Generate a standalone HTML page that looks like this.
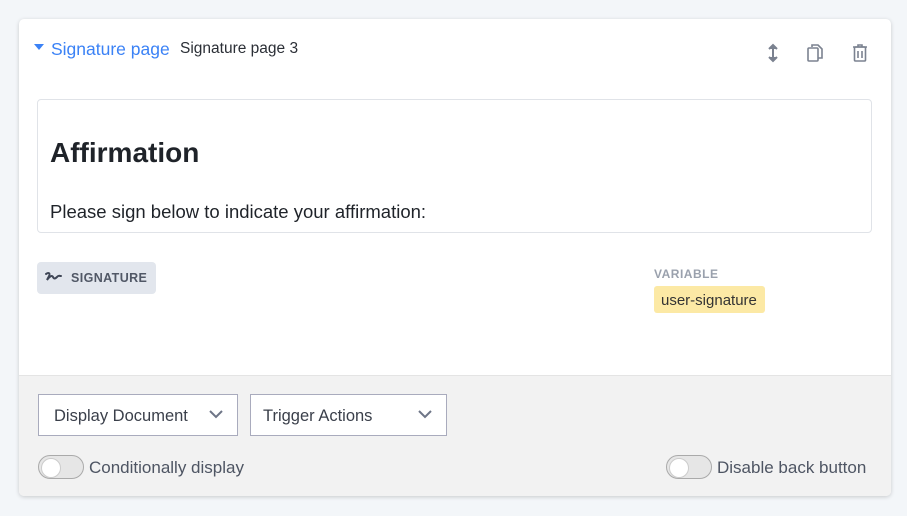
<!DOCTYPE html>
<html><head><style>
*{box-sizing:border-box;margin:0;padding:0}
body{width:907px;height:516px;background:#f3f6f9;font-family:"Liberation Sans",sans-serif;position:relative;overflow:hidden}
.card{position:absolute;left:19px;top:19px;width:872px;height:477px;background:#fff;border-radius:5px;box-shadow:0 1px 4px rgba(0,0,0,.18);overflow:hidden}
.abs{position:absolute}
.foot{position:absolute;left:0;top:356px;width:872px;height:121px;background:#f2f2f2;border-top:1px solid #e4e4e4}
.sel{position:absolute;top:18px;height:42px;background:#fff;border:1px solid #a9abbd;font-size:16.5px;color:#3a3f4a;padding:12px 0 0 15px}
.sel svg{position:absolute;right:14px;top:15px}
.tog{position:absolute;width:46px;height:24px;border-radius:12px;background:#e6e6e6;border:1px solid #aaa}
.tog:after{content:"";position:absolute;left:2px;top:2px;width:18px;height:18px;border-radius:50%;background:#fff;border:1px solid #ccc}
.lbl{position:absolute;font-size:17px;color:#4e5563}
</style></head><body>
<div class="card">
 <svg class="abs" style="left:15px;top:25px" width="10" height="7"><path d="M0 0h10L5 6z" fill="#3b82f6"/></svg>
 <div class="abs" style="left:32px;top:20px;font-size:17.5px;color:#3b82f6">Signature page</div>
 <div class="abs" style="left:161px;top:21px;font-size:15.5px;color:#2b2f36">Signature page 3</div>
 <svg class="abs" style="left:747px;top:24px" width="14" height="20" viewBox="0 0 14 20" fill="none" stroke="#7b8290" stroke-width="2"><path d="M7 3v14"/><path d="M3 6l4-4 4 4M3 14l4 4 4-4" fill="#7b8290"/></svg>
 <svg class="abs" style="left:787px;top:24px" width="18" height="20" viewBox="0 0 18 20" fill="none" stroke="#7b8290" stroke-width="1.6"><path d="M6 4V2h6l4 4v9h-4"/><rect x="2" y="5" width="10" height="13" rx="1"/></svg>
 <svg class="abs" style="left:832px;top:24px" width="18" height="20" viewBox="0 0 18 20" fill="none" stroke="#7b8290" stroke-width="1.6"><path d="M2 4h14M7 4V2h4v2"/><rect x="3.5" y="4" width="11" height="14" rx="1"/><path d="M7 8v7M11 8v7"/></svg>
 <div class="abs" style="left:18px;top:80px;width:835px;height:134px;border:1px solid #e0e3e8;border-radius:4px"></div>
 <div class="abs" style="left:31px;top:118px;font-size:28px;font-weight:bold;color:#1f2329">Affirmation</div>
 <div class="abs" style="left:31px;top:182px;font-size:18.5px;color:#1f2329">Please sign below to indicate your affirmation:</div>
 <div class="abs" style="left:18px;top:243px;width:119px;height:32px;background:#e2e6ed;border-radius:4px"></div>
 <svg class="abs" style="left:25px;top:252px" width="20" height="12" viewBox="0 0 20 12" fill="none" stroke="#3f4656" stroke-width="2" stroke-linecap="round"><path d="M2 3c3-2 5-1 2 4l-1 2c3-4 5-5 6-3s2 2 4 0 2-1 4-1"/></svg>
 <div class="abs" style="left:52px;top:252px;font-size:12.5px;font-weight:bold;letter-spacing:.4px;color:#515866">SIGNATURE</div>
 <div class="abs" style="left:635px;top:248px;font-size:12px;font-weight:bold;letter-spacing:.5px;color:#9aa1ad">VARIABLE</div>
 <div class="abs" style="left:635px;top:267px;width:111px;height:27px;background:#fce9a5;border-radius:3px;font-size:15px;color:#333;padding:6px 0 0 7px">user-signature</div>
 <div class="foot">
  <div class="sel" style="left:19px;width:200px">Display Document<svg width="14" height="9" viewBox="0 0 14 9"><path d="M1 1l6 6 6-6" fill="none" stroke="#6e7587" stroke-width="2"/></svg></div>
  <div class="sel" style="left:231px;width:197px;padding-left:12px">Trigger Actions<svg width="14" height="9" viewBox="0 0 14 9"><path d="M1 1l6 6 6-6" fill="none" stroke="#6e7587" stroke-width="2"/></svg></div>
  <div class="tog" style="left:19px;top:79px"></div>
  <div class="lbl" style="left:70px;top:82px">Conditionally display</div>
  <div class="tog" style="left:647px;top:79px"></div>
  <div class="lbl" style="left:698px;top:82px">Disable back button</div>
 </div>
</div>
</body></html>
